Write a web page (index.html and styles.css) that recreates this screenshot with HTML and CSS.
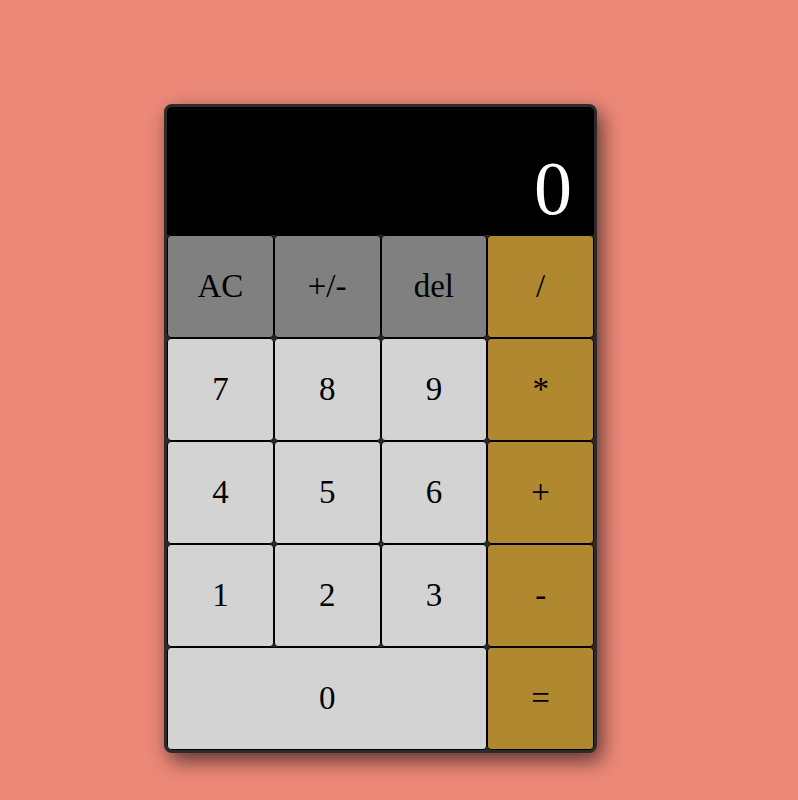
FILE: index.html
```html
<!DOCTYPE html>
<html lang="en">
<head>
<meta charset="utf-8">
<title>Calculator</title>
<link rel="stylesheet" href="styles.css">
</head>
<body>
  <div class="calculator">
    <div class="display"><span class="value">0</span></div>
    <div class="keys">
      <button class="key fn">AC</button>
      <button class="key fn">+/-</button>
      <button class="key fn">del</button>
      <button class="key op">/</button>
      <button class="key">7</button>
      <button class="key">8</button>
      <button class="key">9</button>
      <button class="key op">*</button>
      <button class="key">4</button>
      <button class="key">5</button>
      <button class="key">6</button>
      <button class="key op">+</button>
      <button class="key">1</button>
      <button class="key">2</button>
      <button class="key">3</button>
      <button class="key op">-</button>
      <button class="key zero">0</button>
      <button class="key op">=</button>
    </div>
  </div>
</body>
</html>
```
FILE: styles.css
```css
html, body {
  margin: 0;
  padding: 0;
  background: #ec8878;
  font-family: "Liberation Serif", "Times New Roman", serif;
}

body {
  height: 800px;
  padding-top: 104px;
  box-sizing: border-box;
}

.calculator {
  width: 427px;
  margin-left: 164px;
  border: 3px solid #2b2b2b;
  border-radius: 8px;
  background: #2b2b2b;
  overflow: hidden;
  box-shadow: 5px 8px 20px rgba(0, 0, 0, 0.6);
}

.display {
  height: 128px;
  background: #000;
  color: #fff;
  display: flex;
  align-items: flex-end;
  justify-content: flex-end;
  padding: 0 22px 0 0;
  box-sizing: border-box;
}

.display .value {
  font-size: 76px;
  line-height: 1;
  margin-bottom: 9px;
}

.keys {
  display: grid;
  grid-template-columns: repeat(4, 1fr);
  grid-auto-rows: 103px;
}

.key {
  font-family: inherit;
  font-size: 33px;
  color: #000;
  background: #d3d3d3;
  border: 1px solid #000;
  border-radius: 4px;
  margin: 0;
  padding: 0;
}

.key.fn {
  background: #808080;
}

.key.op {
  background: #b08830;
}

.key.zero {
  grid-column: span 3;
}
```
